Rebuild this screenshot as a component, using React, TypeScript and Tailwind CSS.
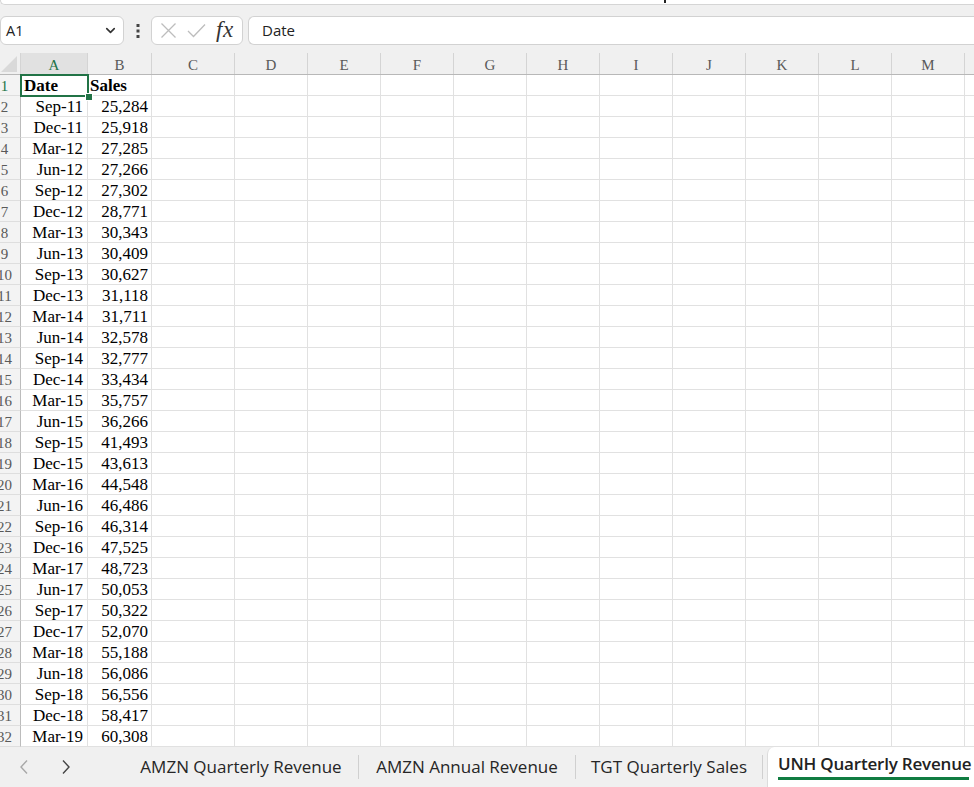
import React from "react";
import { ChevronDown } from "lucide-react";

const data: [string, string][] = [
  ["Sep-11", "25,284"],
  ["Dec-11", "25,918"],
  ["Mar-12", "27,285"],
  ["Jun-12", "27,266"],
  ["Sep-12", "27,302"],
  ["Dec-12", "28,771"],
  ["Mar-13", "30,343"],
  ["Jun-13", "30,409"],
  ["Sep-13", "30,627"],
  ["Dec-13", "31,118"],
  ["Mar-14", "31,711"],
  ["Jun-14", "32,578"],
  ["Sep-14", "32,777"],
  ["Dec-14", "33,434"],
  ["Mar-15", "35,757"],
  ["Jun-15", "36,266"],
  ["Sep-15", "41,493"],
  ["Dec-15", "43,613"],
  ["Mar-16", "44,548"],
  ["Jun-16", "46,486"],
  ["Sep-16", "46,314"],
  ["Dec-16", "47,525"],
  ["Mar-17", "48,723"],
  ["Jun-17", "50,053"],
  ["Sep-17", "50,322"],
  ["Dec-17", "52,070"],
  ["Mar-18", "55,188"],
  ["Jun-18", "56,086"],
  ["Sep-18", "56,556"],
  ["Dec-18", "58,417"],
  ["Mar-19", "60,308"],
];

const cols = ["A", "B", "C", "D", "E", "F", "G", "H", "I", "J", "K", "L", "M"];
const gridCols = "grid grid-cols-[21px_67px_64px_83px_repeat(10,73px)_1fr]";
const serif = "font-['Liberation_Serif',serif]";
const sans = "font-['Open_Sans','Noto_Sans',sans-serif]";

function RowHead({ n, active }: { n: number; active?: boolean }) {
  return (
    <div className="h-[21px] overflow-hidden bg-[#f3f3f3] border-r border-r-[#bcbcbc] border-b border-b-[#dedede]">
      <div className={`w-[9px] h-full flex justify-center items-center pt-[2px] whitespace-nowrap text-[15px] leading-none ${serif} ${active ? "text-[#217346]" : "text-[#595959]"}`}>
        {n}
      </div>
    </div>
  );
}

function Cell({ children, className = "" }: { children?: React.ReactNode; className?: string }) {
  return (
    <div className={`h-[21px] border-r border-b border-[#e1e1e1] flex items-center pt-[1px] overflow-visible whitespace-nowrap text-[17px] leading-none text-black ${serif} ${className}`}>
      {children}
    </div>
  );
}

function EmptyCells() {
  return (
    <>
      {Array.from({ length: 11 }).map((_, i) => (
        <Cell key={i} />
      ))}
      <div className="h-[21px] border-b border-[#e1e1e1]" />
    </>
  );
}

export default function App() {
  return (
    <div className="w-[974px] h-[787px] overflow-hidden bg-[#f0f0f0] flex flex-col relative">
      {/* top strip */}
      <div className="h-[5px] bg-white border-b border-l border-[#d5d5d5] rounded-bl-[6px] shrink-0" />
      <div className="absolute left-[664px] top-0 w-[2px] h-[3px] bg-[#222]" />

      {/* formula bar */}
      <div className="h-[48px] shrink-0 pt-[11px] flex items-start">
        <div className="h-[29px] w-[124px] bg-white border border-[#d2d2d2] rounded-[6px] flex items-center justify-between pl-[5px] pr-[5px]">
          <span className={`text-[14.5px] text-[#222] ${sans}`}>A1</span>
          <ChevronDown size={15} strokeWidth={2.6} className="text-[#333]" />
        </div>
        <div className="w-[27px] h-[29px] flex items-center justify-center">
          <svg width="4" height="14" viewBox="0 0 4 14">
            <rect x="0.5" y="0" width="3" height="3" fill="#444" />
            <rect x="0.5" y="5.5" width="3" height="3" fill="#444" />
            <rect x="0.5" y="11" width="3" height="3" fill="#444" />
          </svg>
        </div>
        <div className="h-[29px] w-[92px] bg-white border border-[#d2d2d2] rounded-[6px] flex items-center pl-[8px]">
          <svg width="17" height="17" viewBox="0 0 17 17" className="mr-[10px]">
            <path d="M1.5 1.5 L15.5 15.5 M15.5 1.5 L1.5 15.5" stroke="#bdbdbd" strokeWidth="1.3" fill="none" />
          </svg>
          <svg width="19" height="15" viewBox="0 0 19 15" className="mr-[10px]">
            <path d="M1 8 L6.5 13.5 L18 1.5" stroke="#bdbdbd" strokeWidth="1.3" fill="none" />
          </svg>
          <span className="italic text-[23px] leading-none text-[#333] font-['Liberation_Serif',serif] mb-[3px] tracking-[0.5px]">fx</span>
        </div>
        <div className="h-[29px] flex-1 ml-[5px] bg-white border border-r-0 border-[#d2d2d2] rounded-l-[6px] flex items-center pl-[13px]">
          <span className={`text-[15px] text-[#222] ${sans}`}>Date</span>
        </div>
      </div>

      {/* column headers */}
      <div className={`${gridCols} h-[22px] shrink-0 bg-[#f0f0f0] border-b border-[#b8b8b8]`}>
        <div className="relative border-r border-[#d4d4d4]">
          <svg width="16" height="16" viewBox="0 0 16 16" className="absolute right-[3px] bottom-[2px]">
            <path d="M16 0 L16 16 L0 16 Z" fill="#d9d9d9" />
          </svg>
        </div>
        {cols.map((c, i) => (
          <div
            key={c}
            className={`flex items-center justify-center pt-[3px] border-r border-[#d4d4d4] text-[15px] leading-none ${serif} ${
              i === 0 ? "bg-[#e1e1e1] text-[#217346]" : "text-[#595959]"
            }`}
          >
            {c}
          </div>
        ))}
        <div />
      </div>

      {/* sheet */}
      <div className={`${gridCols} bg-white shrink-0 relative`}>
        <RowHead n={1} active />
        <Cell className="font-bold pl-[3px]">Date</Cell>
        <Cell className="font-bold pl-[2px]">Sales</Cell>
        <EmptyCells />
        {data.map(([d, v], i) => (
          <React.Fragment key={d}>
            <RowHead n={i + 2} />
            <Cell className="justify-end pr-[4px]">{d}</Cell>
            <Cell className="justify-end pr-[3px]">{v}</Cell>
            <EmptyCells />
          </React.Fragment>
        ))}
        {/* selection */}
        <div className="absolute left-[20px] top-[-1px] w-[69px] h-[23px] border-2 border-[#217346] pointer-events-none" />
        <div className="absolute left-[85px] top-[18px] w-[6px] h-[6px] bg-[#217346] border border-white box-content" />
      </div>

      {/* tab bar */}
      <div className={`flex-1 flex items-stretch ${sans}`}>
        <div className="w-[124px] flex items-center pl-[19px] gap-[32px]">
          <svg width="10" height="16" viewBox="0 0 10 16">
            <path d="M8 1.5 L2 8 L8 14.5" stroke="#a8a8a8" strokeWidth="1.4" fill="none" />
          </svg>
          <svg width="10" height="16" viewBox="0 0 10 16">
            <path d="M2 1.5 L8 8 L2 14.5" stroke="#444" strokeWidth="1.4" fill="none" />
          </svg>
        </div>
        <div className="w-[234px] flex items-center justify-center text-[17px] text-[#262626] pb-[1px]">AMZN Quarterly Revenue</div>
        <div className="w-px h-[24px] bg-[#d0d0d0] self-center" />
        <div className="w-[216px] flex items-center justify-center text-[17px] text-[#262626] pb-[1px]">AMZN Annual Revenue</div>
        <div className="w-px h-[24px] bg-[#d0d0d0] self-center" />
        <div className="w-[186px] flex items-center justify-center text-[17px] text-[#262626] pb-[1px]">TGT Quarterly Sales</div>
        <div className="w-px h-[24px] bg-[#d0d0d0] self-center" />
        <div className="ml-[4px] flex-1 bg-white rounded-tl-[7px] border-l border-[#dcdcdc] flex flex-col pl-[10px] pt-[5px]">
          <span className="text-[17px] font-semibold text-[#222] leading-[24px] whitespace-nowrap tracking-[-0.2px]">UNH Quarterly Revenue</span>
          <div className="h-[3px] w-[191px] bg-[#107c41] mt-[1px]" />
        </div>
      </div>
    </div>
  );
}
